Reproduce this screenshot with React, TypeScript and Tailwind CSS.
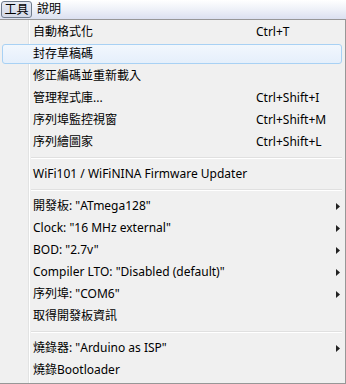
type Item =
  | { kind: "item"; label: string; shortcut?: string; sub?: boolean; hover?: boolean }
  | { kind: "sep" };

const items: Item[] = [
  { kind: "item", label: "自動格式化", shortcut: "Ctrl+T" },
  { kind: "item", label: "封存草稿碼", hover: true },
  { kind: "item", label: "修正編碼並重新載入" },
  { kind: "item", label: "管理程式庫...", shortcut: "Ctrl+Shift+I" },
  { kind: "item", label: "序列埠監控視窗", shortcut: "Ctrl+Shift+M" },
  { kind: "item", label: "序列繪圖家", shortcut: "Ctrl+Shift+L" },
  { kind: "sep" },
  { kind: "item", label: "WiFi101 / WiFiNINA Firmware Updater" },
  { kind: "sep" },
  { kind: "item", label: '開發板: "ATmega128"', sub: true },
  { kind: "item", label: 'Clock: "16 MHz external"', sub: true },
  { kind: "item", label: 'BOD: "2.7v"', sub: true },
  { kind: "item", label: 'Compiler LTO: "Disabled (default)"', sub: true },
  { kind: "item", label: '序列埠: "COM6"', sub: true },
  { kind: "item", label: "取得開發板資訊" },
  { kind: "sep" },
  { kind: "item", label: '燒錄器: "Arduino as ISP"', sub: true },
  { kind: "item", label: "燒錄Bootloader" },
];

function Arrow() {
  return (
    <svg width="4" height="7" viewBox="0 0 4 7" className="absolute right-[5px] top-[8px]">
      <path d="M0 0 L4 3.5 L0 7 Z" fill="#222" />
    </svg>
  );
}

export default function App() {
  return (
    <div className="w-[346px] h-[384px] bg-[#f0f0f0] font-['Noto_Sans','Noto_Sans_CJK_TC',sans-serif] text-[12px] text-black overflow-hidden">
      {/* menubar */}
      <div className="h-[19px] flex items-start bg-gradient-to-b from-[#ffffff] via-[#eef1f8] to-[#dbe0f0]">
        <div className="ml-[1px] mt-[1px] h-[17px] w-[31px] rounded-[3px] border border-[#6f7b8c] bg-gradient-to-b from-[#e6eaf3] to-[#d3d9e8] flex items-center justify-center leading-none">
          工具
        </div>
        <div className="ml-[5px] h-[18px] flex items-center leading-none">說明</div>
      </div>

      {/* dropdown */}
      <div className="relative h-[365px] border-t border-r border-b border-[#979797] pt-[1px]">
        <div className="absolute left-[28px] top-0 bottom-0 w-[2px] border-l border-[#e2e3e3] bg-transparent">
          <div className="h-full w-[1px] bg-white" />
        </div>
        {items.map((it, i) =>
          it.kind === "sep" ? (
            <div key={i} className="h-[10px] flex items-center pl-[31px] pr-[3px]">
              <div className="w-full border-t border-[#e0e0e0] border-b border-b-white" />
            </div>
          ) : (
            <div key={i} className="relative h-[22px] flex items-center">
              {it.hover && (
                <div className="absolute left-[2px] right-[3px] top-[1px] bottom-[1px] rounded-[3px] border border-[#a8d1f4] bg-gradient-to-b from-[#f2f7fd] to-[#e5effb]" />
              )}
              <span className="relative pl-[33px] w-[256px] leading-none whitespace-nowrap">{it.label}</span>
              {it.shortcut && <span className="relative leading-none whitespace-nowrap">{it.shortcut}</span>}
              {it.sub && <Arrow />}
            </div>
          )
        )}
      </div>
    </div>
  );
}
